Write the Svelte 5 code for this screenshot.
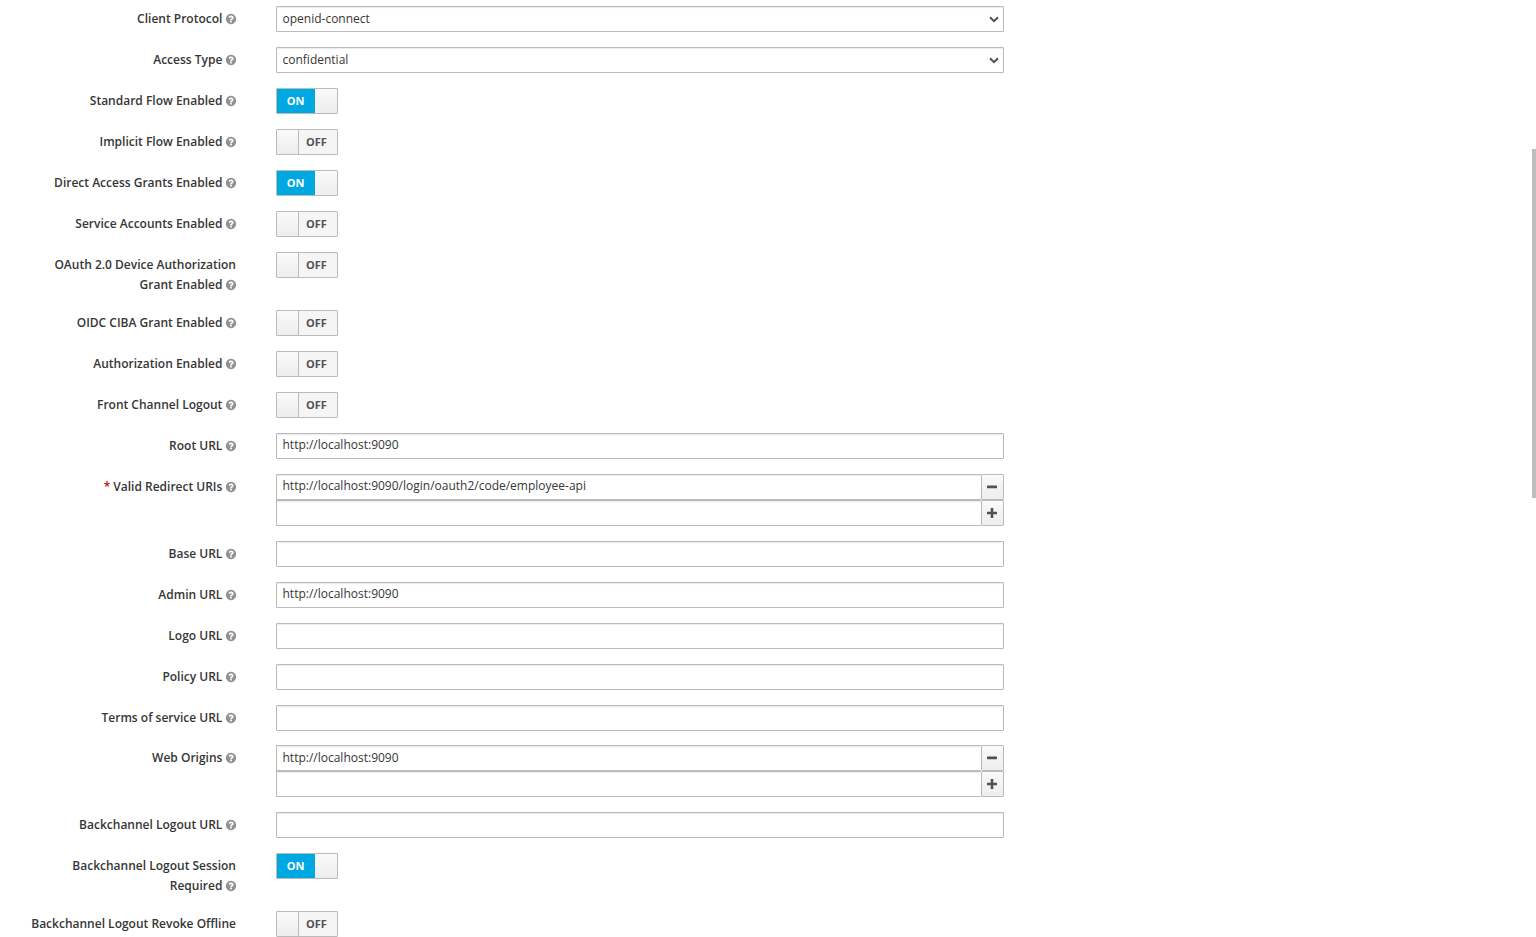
<script>
  const help = "M1024 1376v-192q0-14-9-23t-23-9h-192q-14 0-23 9t-9 23v192q0 14 9 23t23 9h192q14 0 23-9t9-23zm256-672q0-88-55.5-163t-138.5-116-170-41q-243 0-371 213-15 24 8 42l132 100q7 6 19 6 16 0 25-12 53-68 86-92 34-24 86-24 48 0 85.5 26t37.5 59q0 38-20 61t-68 45q-63 28-115.5 86.5t-52.5 125.5v36q0 14 9 23t23 9h192q14 0 23-9t9-23q0-19 21.5-49.5t54.5-49.5q32-18 49-28.5t46-35 44.5-48 28-60.5 12.5-81zm384 192q0 209-103 385.5t-279.5 279.5-385.5 103-385.5-103-279.5-279.5-103-385.5 103-385.5 279.5-279.5 385.5-103 385.5 103 279.5 279.5 103 385.5z";
  const rows = [
    { label: "Client Protocol", kind: "select", value: "openid-connect" },
    { label: "Access Type", kind: "select", value: "confidential" },
    { label: "Standard Flow Enabled", kind: "switch", on: true },
    { label: "Implicit Flow Enabled", kind: "switch", on: false },
    { label: "Direct Access Grants Enabled", kind: "switch", on: true },
    { label: "Service Accounts Enabled", kind: "switch", on: false },
    { label: "OAuth 2.0 Device Authorization Grant Enabled", kind: "switch", on: false },
    { label: "OIDC CIBA Grant Enabled", kind: "switch", on: false },
    { label: "Authorization Enabled", kind: "switch", on: false },
    { label: "Front Channel Logout", kind: "switch", on: false },
    { label: "Root URL", kind: "input", value: "http://localhost:9090" },
    { label: "Valid Redirect URIs", kind: "multi", value: "http://localhost:9090/login/oauth2/code/employee-api", required: true },
    { label: "Base URL", kind: "input", value: "" },
    { label: "Admin URL", kind: "input", value: "http://localhost:9090" },
    { label: "Logo URL", kind: "input", value: "" },
    { label: "Policy URL", kind: "input", value: "" },
    { label: "Terms of service URL", kind: "input", value: "" },
    { label: "Web Origins", kind: "multi", value: "http://localhost:9090" },
    { label: "Backchannel Logout URL", kind: "input", value: "" },
    { label: "Backchannel Logout Session Required", kind: "switch", on: true },
    { label: "Backchannel Logout Revoke Offline", kind: "switch", on: false, nohelp: true }
  ];
</script>

<div class="page">
  <form class="form">
    {#each rows as row}
      <div class="row">
        <div class="label">
          {#if row.required}<span class="req">*</span>{/if}{row.label}{#if !row.nohelp}&nbsp;<svg class="help" viewBox="0 0 1792 1792"><path d={help} /></svg>{/if}
        </div>
        <div class="control">
          {#if row.kind === "select"}
            <div class="selectwrap">
              <select class="field">
                <option>{row.value}</option>
              </select>
              <svg class="chev" viewBox="0 0 10 7"><path d="M1 1.2 5 5.2 9 1.2" /></svg>
            </div>
          {:else if row.kind === "switch"}
            <div class="switch">
              {#if row.on}
                <span class="on">ON</span><span class="handle hon"></span>
              {:else}
                <span class="handle hoff"></span><span class="off">OFF</span>
              {/if}
            </div>
          {:else if row.kind === "input"}
            <input class="field" value={row.value} />
          {:else}
            <div class="multi">
              <div class="group">
                <input class="field" value={row.value} />
                <button type="button" class="addon" aria-label="Remove">
                  <svg viewBox="0 0 10 10"><rect x="0" y="3.6" width="10" height="2.6" rx=".4" /></svg>
                </button>
              </div>
              <div class="group">
                <input class="field" value="" />
                <button type="button" class="addon" aria-label="Add">
                  <svg viewBox="0 0 10 10"><path d="M3.7 0h2.6v3.7H10v2.6H6.3V10H3.7V6.3H0V3.7h3.7z" /></svg>
                </button>
              </div>
            </div>
          {/if}
        </div>
      </div>
    {/each}
  </form>
  <div class="thumb"></div>
</div>

<style>
  :global(body) {
    margin: 0;
    background: #fff;
    overflow: hidden;
  }
  .page {
    height: 937px;
    overflow: hidden;
    position: relative;
    font-family: "Open Sans", "Noto Sans", sans-serif;
    font-size: 12px;
    color: #363636;
  }
  .form {
    padding-top: 6px;
    width: 1004px;
  }
  .row {
    display: flex;
    gap: 40px;
    margin-bottom: 14.97px;
  }
  .label {
    width: 206px;
    margin-left: 30px;
    flex: none;
    padding-top: 3px;
    box-sizing: border-box;
    text-align: right;
    font-weight: 600;
    line-height: 20px;
  }
  .req {
    color: #c00;
    margin-right: 3px;
    line-height: 12px;
  }
  .help {
    width: 12px;
    height: 12px;
    fill: #8f9193;
    vertical-align: -2px;
    margin: 0 -1px 0 -0.5px;
  }
  .control {
    width: 728px;
    flex: none;
  }
  .field {
    display: block;
    width: 100%;
    height: 26px;
    box-sizing: border-box;
    border: 1px solid #bbb;
    border-radius: 1px;
    background: #fff;
    padding: 1px 6px 3px 5.5px;
    margin: 0;
    font: 12px/20px "Open Sans", "Noto Sans", sans-serif;
    color: #363636;
    box-shadow: inset 0 1px 1px rgba(3, 3, 3, 0.08);
    outline: none;
  }
  select.field {
    appearance: none;
    padding: 2px 6px 2px 5.5px;
  }
  .selectwrap {
    position: relative;
  }
  .chev {
    position: absolute;
    right: 5px;
    top: 10px;
    width: 10px;
    height: 7px;
    fill: none;
    stroke: #4d5258;
    stroke-width: 2;
  }
  .switch {
    display: flex;
    width: 62px;
    height: 26px;
    box-sizing: border-box;
    border: 1px solid #bbb;
    border-radius: 1px;
    overflow: hidden;
    font-weight: 700;
    font-size: 11px;
    line-height: 24px;
    text-align: center;
  }
  .on {
    width: 38px;
    box-sizing: border-box;
    padding-right: 1px;
    background: #00a8e1;
    color: #fff;
    flex: none;
  }
  .off {
    flex: 1;
    padding-right: 3px;
    background: #f5f5f5;
    color: #4d5258;
  }
  .handle {
    background: linear-gradient(#fafafa, #ededed);
  }
  .hon {
    flex: 1;
  }
  .hoff {
    width: 21px;
    flex: none;
    border-right: 1px solid #bbb;
  }
  .multi {
    display: flex;
    flex-direction: column;
  }
  .group {
    display: flex;
  }
  .group .field {
    flex: 1;
    min-width: 0;
    border-right: 0;
  }
  .addon {
    flex: none;
    width: 23px;
    height: 26px;
    padding: 0 1px 0 0;
    margin: 0;
    box-sizing: border-box;
    border: 1px solid #bbb;
    border-radius: 1px;
    background: linear-gradient(#fafafa, #ededed);
    display: flex;
    align-items: center;
    justify-content: center;
  }
  .addon svg {
    width: 10px;
    height: 10px;
    fill: #4d5258;
  }
  .thumb {
    position: absolute;
    right: 0;
    top: 149px;
    width: 4px;
    height: 349px;
    background: #bdbdbd;
  }
</style>
